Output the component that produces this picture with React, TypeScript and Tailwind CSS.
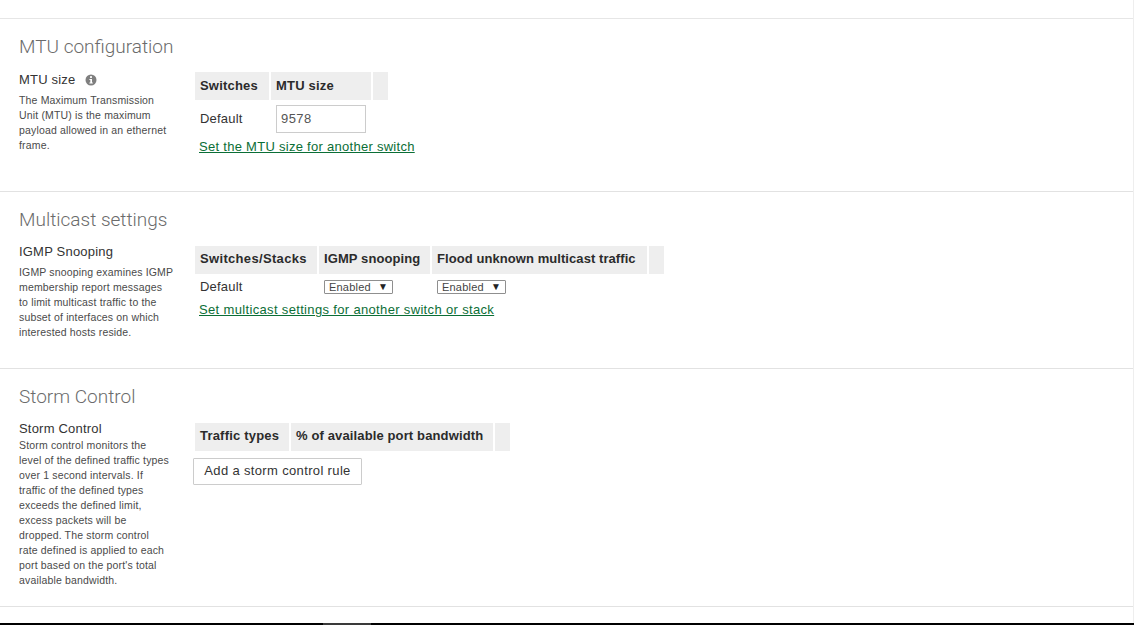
import React from 'react';

const Head: React.FC<{ w: string; track?: string; children?: React.ReactNode }> = ({ w, track, children }) => (
  <div className={`${w} ${track ?? 'tracking-[0.2px]'} h-[28px] flex-none bg-[#eeeeee] pl-[5px] flex items-center text-[13px] font-bold text-[#2b2b2b]`}>
    {children}
  </div>
);

const Select: React.FC = () => (
  <div className="w-[69px] h-[14px] border border-[#8f8f8f] rounded-[1px] bg-white flex items-center justify-between pl-[4px] pr-[4px] text-[11px] leading-none text-[#444444]">
    <span>Enabled</span>
    <span className="text-[10px] text-[#222222]">▼</span>
  </div>
);

const GreenLink: React.FC<{ track: string; children: React.ReactNode }> = ({ track, children }) => (
  <a href="#" className={`${track} text-[13px] leading-[16px] text-[#0b6e36] underline`}>
    {children}
  </a>
);

const Section: React.FC<{
  title: string;
  height: string;
  label: React.ReactNode;
  labelClass: string;
  description: string[];
  descClass: string;
  children: React.ReactNode;
}> = ({ title, height, label, labelClass, description, descClass, children }) => (
  <section className={`${height} border-b border-[#e2e2e2] pl-[19px] flex-none`}>
    <h2 className="h-[54px] pt-[16px] text-[19px] leading-[24px] font-light text-[#6b6b6b] font-['Roboto',sans-serif]">{title}</h2>
    <div className="flex">
      <div className="w-[176px] flex-none">
        <div className={`${labelClass} text-[13px] leading-[16px] text-[#333333] tracking-[0.2px] flex items-center`}>{label}</div>
        <div className={`${descClass} text-[10.5px] leading-[15px] text-[#4a4a4a] tracking-[0.16px] whitespace-nowrap`}>
          {description.map((line) => (
            <div key={line}>{line}</div>
          ))}
        </div>
      </div>
      <div className="flex-1">{children}</div>
    </div>
  </section>
);

export default function App() {
  return (
    <div className="w-[1134px] h-[625px] overflow-hidden bg-white font-['Liberation_Sans',Arial,sans-serif] flex flex-col">
      <div className="flex-1 flex flex-col border-r border-[#eeeeee]">
        <div className="h-[19px] flex-none border-b border-[#e6e6e6]" />

        <Section
          title="MTU configuration"
          height="h-[173px]"
          labelClass="-mt-[1px]"
          descClass="mt-[5px]"
          label={
            <>
              MTU size
              <svg viewBox="0 0 12 12" className="w-[12px] h-[12px] ml-[9px]">
                <circle cx="6" cy="6" r="5.5" fill="#7f7f7f" />
                <rect x="5" y="2.2" width="2" height="1.7" fill="#ffffff" />
                <path d="M4.4 5h2.6v3.6h.8v1H4.4v-1h.9V6h-.9z" fill="#ffffff" />
              </svg>
            </>
          }
          description={[
            'The Maximum Transmission',
            'Unit (MTU) is the maximum',
            'payload allowed in an ethernet',
            'frame.',
          ]}
        >
          <div className="flex gap-[2px] -mt-[1px]">
            <Head w="w-[74px]">Switches</Head>
            <Head w="w-[100px]">MTU size</Head>
            <Head w="w-[15px]" />
          </div>
          <div className="flex items-center h-[33px] mt-[2px] pl-[5px] text-[13px] text-[#333333] tracking-[0.2px]">
            <span className="w-[76px]">Default</span>
            <input
              readOnly
              value="9578"
              className="w-[90px] h-[28px] border border-[#cccccc] px-[4px] text-[13px] text-[#555555] tracking-[0.45px] outline-none"
            />
          </div>
          <div className="pl-[4px] -mt-[1px]">
            <GreenLink track="tracking-[0.28px]">Set the MTU size for another switch</GreenLink>
          </div>
        </Section>

        <Section
          title="Multicast settings"
          height="h-[177px]"
          labelClass="-mt-[2px]"
          descClass="mt-[5px]"
          label="IGMP Snooping"
          description={[
            'IGMP snooping examines IGMP',
            'membership report messages',
            'to limit multicast traffic to the',
            'subset of interfaces on which',
            'interested hosts reside.',
          ]}
        >
          <div className="flex gap-[2px]">
            <Head w="w-[122px] pb-[2px]" track="tracking-[0.33px]">Switches/Stacks</Head>
            <Head w="w-[111px] pb-[2px]" track="tracking-[0.1px]">IGMP snooping</Head>
            <Head w="w-[215px] pb-[2px]" track="tracking-[0.07px]">Flood unknown multicast traffic</Head>
            <Head w="w-[15px]" />
          </div>
          <div className="flex items-center h-[26px] pl-[5px] text-[13px] text-[#333333] tracking-[0.2px]">
            <span className="w-[124px]">Default</span>
            <div className="w-[113px]"><Select /></div>
            <Select />
          </div>
          <div className="pl-[4px] -mt-[3px]">
            <GreenLink track="tracking-[0.34px]">Set multicast settings for another switch or stack</GreenLink>
          </div>
        </Section>

        <Section
          title="Storm Control"
          height="h-[238px]"
          labelClass="-mt-[2px]"
          descClass="mt-[1px]"
          label="Storm Control"
          description={[
            'Storm control monitors the',
            'level of the defined traffic types',
            'over 1 second intervals. If',
            'traffic of the defined types',
            'exceeds the defined limit,',
            'excess packets will be',
            'dropped. The storm control',
            'rate defined is applied to each',
            "port based on the port's total",
            'available bandwidth.',
          ]}
        >
          <div className="flex gap-[2px]">
            <Head w="w-[94px] pb-[2px]" track="tracking-[0.2px]">Traffic types</Head>
            <Head w="w-[202px] pb-[2px]" track="tracking-[0.13px]">% of available port bandwidth</Head>
            <Head w="w-[15px]" />
          </div>
          <button className="block mt-[7px] -ml-[2px] w-[169px] h-[27px] pb-[2px] border border-[#cccccc] rounded-[1px] bg-white text-[13px] text-[#333333] tracking-[0.35px]">
            Add a storm control rule
          </button>
        </Section>

        <div className="flex-1" />
      </div>
      <div className="h-[2px] flex-none bg-black flex">
        <div className="ml-[323px] w-[48px] bg-[#3a3a3a]" />
      </div>
    </div>
  );
}
